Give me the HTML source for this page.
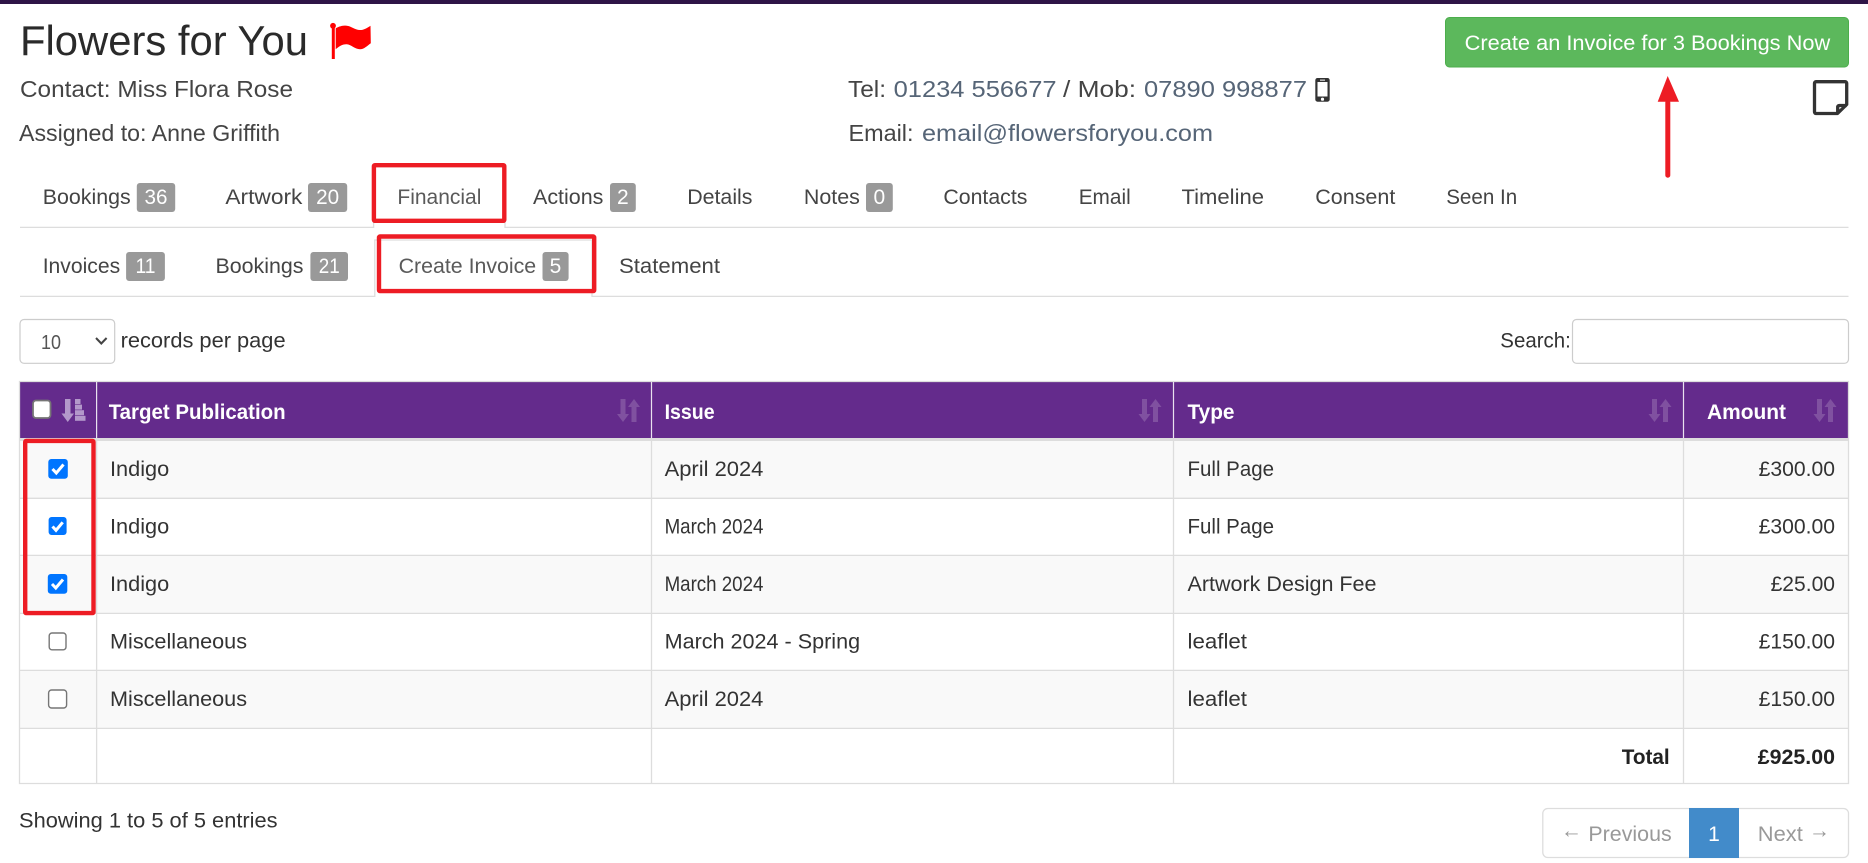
<!DOCTYPE html>
<html lang="en">
<head>
<meta charset="utf-8">
<title>Flowers for You</title>
<style>
html,body{margin:0;padding:0;background:#fff;width:1868px;height:863px;overflow:hidden}
svg{display:block}
text{font-family:"Liberation Sans",Arial,sans-serif;font-size:21.5px;fill:#333}
.h{font-size:41.5px;fill:#2a2a2a}
.c{font-size:23px;fill:#444}
.l{font-size:23px;fill:#566577}
.t{fill:#444}
.a{fill:#5a5a5a}
.b{fill:#fff;text-anchor:middle;font-size:21px}
.th{fill:#fff;font-weight:bold}
.bd{font-weight:bold;fill:#222}
.g{fill:#999}
.ln{fill:none;stroke:#ddd;stroke-width:1.3}
.red{fill:none;stroke:#ed1c24;stroke-width:4.4}
</style>
</head>
<body>
<svg xmlns="http://www.w3.org/2000/svg" width="1868" height="863" viewBox="0 0 1868 863">
<defs>
<path id="sort" d="M3.5 0h5v15h3.500l-6 8-6-8h3.500zM17 0l6 8h-3.500v15h-5V8H11z"/>
</defs>
<rect width="1868" height="863" fill="#fff"/>
<rect width="1868" height="4" fill="#2e1547"/>

<!-- header -->
<text class="h" x="20" y="55" textLength="288" lengthAdjust="spacingAndGlyphs">Flowers for You</text>
<circle cx="333" cy="25.800" r="2.900" fill="#f00"/>
<rect x="331.800" y="26" width="3" height="33" fill="#f00"/>
<path d="M335.700 28.300C340 26 343 25.500 346.700 25.700C351 26 355 30 360 30C364 30 367 28 370.500 25.700L370.800 43.300C367 46 364 49.300 360 49.300C355 49.300 351 44.500 346.700 44.300C342 44.200 339 46.500 335.700 49.300Z" fill="#f00"/>

<text class="c" x="20" y="97" textLength="273" lengthAdjust="spacingAndGlyphs">Contact: Miss Flora Rose</text>
<text class="c" x="19" y="141" textLength="261" lengthAdjust="spacingAndGlyphs">Assigned to: Anne Griffith</text>

<text class="c" x="848" y="97" textLength="38" lengthAdjust="spacingAndGlyphs">Tel:</text>
<text class="l" x="893.600" y="97" textLength="163" lengthAdjust="spacingAndGlyphs">01234 556677</text>
<text class="c" x="1063" y="97" textLength="73" lengthAdjust="spacingAndGlyphs">/ Mob:</text>
<text class="l" x="1144" y="97" textLength="163" lengthAdjust="spacingAndGlyphs">07890 998877</text>
<path fill-rule="evenodd" d="M1317.500 78h10a2.200 2.200 0 0 1 2.200 2.200v19.300a2.200 2.200 0 0 1-2.200 2.200h-10a2.200 2.200 0 0 1-2.200-2.200V80.200a2.200 2.200 0 0 1 2.200-2.200zM1317.500 82v14.500h10V82zM1320 79.600v1h5v-1zM1322.500 97.600a1.600 1.600 0 1 0 0 3.200 1.600 1.600 0 0 0 0-3.200z" fill="#333"/>

<text class="c" x="848.500" y="141" textLength="65" lengthAdjust="spacingAndGlyphs">Email:</text>
<text class="l" x="922" y="141" textLength="291" lengthAdjust="spacingAndGlyphs">email@flowersforyou.com</text>

<!-- create button -->
<rect x="1445.500" y="17.500" width="403" height="49.500" rx="4" fill="#5cb85c" stroke="#4cae4c"/>
<text x="1464.700" y="50" textLength="365.500" lengthAdjust="spacingAndGlyphs" style="fill:#fff">Create an Invoice for 3 Bookings Now</text>

<!-- note icon -->
<path d="M1816 81.700h29.200a1.500 1.500 0 0 1 1.500 1.500v21.300l-9.200 9H1816a1.500 1.500 0 0 1-1.500-1.500V83.200a1.500 1.500 0 0 1 1.500-1.500z" fill="#fff" stroke="#333" stroke-width="3.300" stroke-linejoin="round"/>
<path d="M1846.700 105.500h-7.500a1.500 1.500 0 0 0-1.500 1.500v6.500" fill="none" stroke="#333" stroke-width="3.300"/>

<!-- red arrow -->
<path d="M1667.700 76L1679 101.700H1657.700Z" fill="#ed1c24"/>
<rect x="1665.300" y="100" width="5" height="77.700" rx="2.500" fill="#ed1c24"/>

<!-- tabs row 1 -->
<path class="ln" d="M20 227.400H373.600V165M373.600 165H505V227.400H1848.500"/>
<text class="t" x="42.700" y="204" textLength="88" lengthAdjust="spacingAndGlyphs">Bookings</text>
<rect x="136.800" y="183" width="38.400" height="29" rx="3" fill="#999"/>
<text class="b" x="156" y="204" textLength="23" lengthAdjust="spacingAndGlyphs">36</text>
<text class="t" x="225.400" y="204" textLength="77" lengthAdjust="spacingAndGlyphs">Artwork</text>
<rect x="308" y="183" width="39.200" height="29" rx="3" fill="#999"/>
<text class="b" x="327.600" y="204" textLength="23" lengthAdjust="spacingAndGlyphs">20</text>
<text class="a" x="397.400" y="204" textLength="84" lengthAdjust="spacingAndGlyphs">Financial</text>
<text class="t" x="533" y="204" textLength="70.400" lengthAdjust="spacingAndGlyphs">Actions</text>
<rect x="610" y="183" width="25.800" height="29" rx="3" fill="#999"/>
<text class="b" x="622.900" y="204">2</text>
<text class="t" x="687.200" y="204" textLength="65.300" lengthAdjust="spacingAndGlyphs">Details</text>
<text class="t" x="803.900" y="204" textLength="56" lengthAdjust="spacingAndGlyphs">Notes</text>
<rect x="866" y="183" width="26.800" height="29" rx="3" fill="#999"/>
<text class="b" x="879.400" y="204">0</text>
<text class="t" x="943.400" y="204" textLength="84" lengthAdjust="spacingAndGlyphs">Contacts</text>
<text class="t" x="1078.700" y="204" textLength="52" lengthAdjust="spacingAndGlyphs">Email</text>
<text class="t" x="1181.500" y="204" textLength="82.500" lengthAdjust="spacingAndGlyphs">Timeline</text>
<text class="t" x="1315.300" y="204" textLength="80" lengthAdjust="spacingAndGlyphs">Consent</text>
<text class="t" x="1446.200" y="204" textLength="71" lengthAdjust="spacingAndGlyphs">Seen In</text>
<rect class="red" x="373.900" y="165.200" width="130.400" height="55.600" rx="1"/>

<!-- tabs row 2 -->
<path class="ln" d="M20 296.400H374.800V240H592V296.400H1848.500"/>
<text class="t" x="42.700" y="273" textLength="77.500" lengthAdjust="spacingAndGlyphs">Invoices</text>
<rect x="126.100" y="252" width="38.800" height="29" rx="3" fill="#999"/>
<text class="b" x="145.500" y="273" textLength="20" lengthAdjust="spacingAndGlyphs">11</text>
<text class="t" x="215.500" y="273" textLength="88" lengthAdjust="spacingAndGlyphs">Bookings</text>
<rect x="310.400" y="252" width="37.600" height="29" rx="3" fill="#999"/>
<text class="b" x="329.200" y="273" textLength="21" lengthAdjust="spacingAndGlyphs">21</text>
<text class="a" x="398.600" y="273" textLength="137.600" lengthAdjust="spacingAndGlyphs">Create Invoice</text>
<rect x="542.500" y="252" width="26.100" height="29" rx="3" fill="#999"/>
<text class="b" x="555.500" y="273">5</text>
<text class="t" x="619" y="273" textLength="101" lengthAdjust="spacingAndGlyphs">Statement</text>
<rect class="red" x="379" y="236.500" width="215.200" height="54.600" rx="1"/>

<!-- length + search -->
<rect x="20" y="319.500" width="94.700" height="43.800" rx="4" fill="#fff" stroke="#ccc" stroke-width="1.200"/>
<text x="41" y="349" textLength="20" lengthAdjust="spacingAndGlyphs" style="font-size:20px;fill:#555">10</text>
<path d="M96 338l5.300 5.500 5.300-5.500" fill="none" stroke="#444" stroke-width="2"/>
<text x="120.600" y="347.500" textLength="165" lengthAdjust="spacingAndGlyphs">records per page</text>
<text x="1500.300" y="347.500" textLength="70.500" lengthAdjust="spacingAndGlyphs">Search:</text>
<rect x="1572.500" y="319.500" width="276" height="43.800" rx="4" fill="#fff" stroke="#ccc" stroke-width="1.200"/>

<!-- table backgrounds -->
<rect x="19.500" y="382" width="1829" height="56" fill="#642b8c"/>
<rect x="19.500" y="438" width="1829" height="3" fill="#ddd"/>
<rect x="19.500" y="441" width="1829" height="57" fill="#f9f9f9"/>
<rect x="19.500" y="556" width="1829" height="57" fill="#f9f9f9"/>
<rect x="19.500" y="671" width="1829" height="57" fill="#f9f9f9"/>
<!-- table grid -->
<path class="ln" d="M19.500 381.500H1848.500V783.500H19.500ZM19.500 498.300H1848.500M19.500 555.400H1848.500M19.500 613.400H1848.500M19.500 670.400H1848.500M19.500 728.400H1848.500M96.600 441V783.500M651.500 441V783.500M1173.500 441V783.500M1683.500 441V783.500"/>
<path d="M96.600 382V438M651.500 382V438M1173.500 382V438M1683.500 382V438" stroke="#e9e2ef" stroke-width="1.200" fill="none"/>

<!-- table head -->
<rect x="33" y="400.500" width="17.500" height="17.500" rx="3" fill="#fff" stroke="#767676" stroke-width="1.800"/>
<g fill="#b398ca">
<path d="M65 399h5.500v14.500h3.500l-6.250 8.500-6.250-8.500h3.500z"/>
<rect x="75" y="399" width="5.500" height="5"/>
<rect x="75" y="404.600" width="7" height="5"/>
<rect x="75" y="410.200" width="9" height="5"/>
<rect x="75" y="415.800" width="10.500" height="5"/>
</g>
<text class="th" x="108.700" y="419" textLength="177" lengthAdjust="spacingAndGlyphs">Target Publication</text>
<text class="th" x="664.600" y="419" textLength="50" lengthAdjust="spacingAndGlyphs">Issue</text>
<text class="th" x="1187.500" y="419" textLength="47" lengthAdjust="spacingAndGlyphs">Type</text>
<text class="th" x="1707" y="419" textLength="79" lengthAdjust="spacingAndGlyphs">Amount</text>
<g fill="#fff" fill-opacity=".18">
<use href="#sort" x="617" y="399"/>
<use href="#sort" x="1138.500" y="399"/>
<use href="#sort" x="1648.500" y="399"/>
<use href="#sort" x="1813.500" y="399"/>
</g>

<!-- checkboxes -->
<g fill="#0075ff">
<rect x="48.300" y="459" width="19.500" height="19.700" rx="3"/>
<rect x="48.600" y="517" width="18" height="18" rx="3"/>
<rect x="47.800" y="574" width="19.500" height="19.700" rx="3"/>
</g>
<g fill="none" stroke="#fff" stroke-width="3">
<path d="M52.500 469l3.800 4 7.200-8.500"/>
<path d="M52.500 526.500l3.500 3.800 6.700-8"/>
<path d="M52 584l3.800 4 7.200-8.500"/>
</g>
<rect x="49.200" y="633" width="16.800" height="16.800" rx="2.800" fill="#fff" stroke="#767676" stroke-width="1.400"/>
<rect x="48.600" y="690" width="18" height="18" rx="3" fill="#fff" stroke="#767676" stroke-width="1.400"/>

<!-- table rows -->
<text x="110" y="476" textLength="59.200" lengthAdjust="spacingAndGlyphs">Indigo</text>
<text x="664.600" y="476" textLength="98.800" lengthAdjust="spacingAndGlyphs">April 2024</text>
<text x="1187.500" y="476" textLength="86.500" lengthAdjust="spacingAndGlyphs">Full Page</text>
<text x="1758.600" y="476" textLength="76.400" lengthAdjust="spacingAndGlyphs">£300.00</text>

<text x="110" y="533.500" textLength="59.200" lengthAdjust="spacingAndGlyphs">Indigo</text>
<text x="664.600" y="533.500" textLength="98.800" lengthAdjust="spacingAndGlyphs">March 2024</text>
<text x="1187.500" y="533.500" textLength="86.500" lengthAdjust="spacingAndGlyphs">Full Page</text>
<text x="1758.600" y="533.500" textLength="76.400" lengthAdjust="spacingAndGlyphs">£300.00</text>

<text x="110" y="591" textLength="59.200" lengthAdjust="spacingAndGlyphs">Indigo</text>
<text x="664.600" y="591" textLength="98.800" lengthAdjust="spacingAndGlyphs">March 2024</text>
<text x="1187.500" y="591" textLength="189" lengthAdjust="spacingAndGlyphs">Artwork Design Fee</text>
<text x="1770.600" y="591" textLength="64.400" lengthAdjust="spacingAndGlyphs">£25.00</text>

<text x="110" y="648.500" textLength="137" lengthAdjust="spacingAndGlyphs">Miscellaneous</text>
<text x="664.600" y="648.500" textLength="195.500" lengthAdjust="spacingAndGlyphs">March 2024 - Spring</text>
<text x="1187.500" y="648.500" textLength="59.500" lengthAdjust="spacingAndGlyphs">leaflet</text>
<text x="1758.600" y="648.500" textLength="76.400" lengthAdjust="spacingAndGlyphs">£150.00</text>

<text x="110" y="706" textLength="137" lengthAdjust="spacingAndGlyphs">Miscellaneous</text>
<text x="664.600" y="706" textLength="98.800" lengthAdjust="spacingAndGlyphs">April 2024</text>
<text x="1187.500" y="706" textLength="59.500" lengthAdjust="spacingAndGlyphs">leaflet</text>
<text x="1758.600" y="706" textLength="76.400" lengthAdjust="spacingAndGlyphs">£150.00</text>

<text class="bd" x="1621.700" y="764" textLength="48" lengthAdjust="spacingAndGlyphs">Total</text>
<text class="bd" x="1757.800" y="764" textLength="77.200" lengthAdjust="spacingAndGlyphs">£925.00</text>

<!-- red box around checkboxes -->
<rect class="red" x="25.200" y="440.900" width="68.300" height="172.200" rx="1"/>

<!-- footer -->
<text x="19" y="827.500" textLength="258.600" lengthAdjust="spacingAndGlyphs">Showing 1 to 5 of 5 entries</text>
<rect x="1542.800" y="808.500" width="305.700" height="49" rx="5" fill="#fff" stroke="#ddd" stroke-width="1.300"/>
<rect x="1689" y="808" width="50" height="50" fill="#428bca"/>
<text class="g" x="1561" y="837.500" textLength="21" lengthAdjust="spacingAndGlyphs">←</text>
<text class="g" x="1588.400" y="841" textLength="83.300" lengthAdjust="spacingAndGlyphs">Previous</text>
<text class="b" x="1714" y="841">1</text>
<text class="g" x="1757.800" y="841" textLength="45" lengthAdjust="spacingAndGlyphs">Next</text>
<text class="g" x="1809" y="837.500" textLength="21" lengthAdjust="spacingAndGlyphs">→</text>
</svg>
</body>
</html>
